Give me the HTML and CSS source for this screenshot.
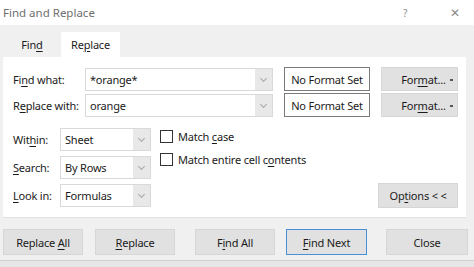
FILE: index.html
```html
<!DOCTYPE html>
<html lang="en">
  <head>
    <meta charset="UTF-8" />
    <title>Find and Replace</title>
    <link rel="stylesheet" href="styles.css">
  </head>
  <body>
    <div class="dialog">
      <header class="titlebar">
        <span class="title">Find and Replace</span>
        <span class="help">?</span>
        <span class="close-x">&#x2715;</span>
      </header>

      <nav class="tabs">
        <span class="tab"><span>Fin<u>d</u></span></span>
        <span class="tab active"><span>Re<u>p</u>lace</span></span>
      </nav>

      <section class="panel">
        <div class="top-grid">
          <label><span>Fi<u>n</u>d what:</span></label>
          <div class="combo wide"><span class="value">*orange*</span><span class="drop"></span></div>
          <div class="format-box">No Format Set</div>
          <button class="btn format-btn"><span>For<u>m</u>at...</span><span class="caret"></span></button>

          <label><span>R<u>e</u>place with:</span></label>
          <div class="combo wide"><span class="value">orange</span><span class="drop"></span></div>
          <div class="format-box">No Format Set</div>
          <button class="btn format-btn"><span>For<u>m</u>at...</span><span class="caret"></span></button>
        </div>

        <div class="lower">
          <div class="opt-grid">
            <label><span>Wit<u>h</u>in:</span></label>
            <div class="combo"><span class="value">Sheet</span><span class="drop"></span></div>
            <label><span><u>S</u>earch:</span></label>
            <div class="combo"><span class="value">By Rows</span><span class="drop"></span></div>
            <label><span><u>L</u>ook in:</span></label>
            <div class="combo"><span class="value">Formulas</span><span class="drop"></span></div>
          </div>

          <div class="checks">
            <div class="check"><span class="box"></span><span>Match <u>c</u>ase</span></div>
            <div class="check"><span class="box"></span><span>Match entire cell c<u>o</u>ntents</span></div>
          </div>

          <button class="btn options-btn">Op<u>t</u>ions &lt; &lt;</button>
        </div>
      </section>

      <footer class="actions">
        <button class="btn act replace-all">Replace <u>A</u>ll</button>
        <button class="btn act replace"><u>R</u>eplace</button>
        <button class="btn act find-all">F<u>i</u>nd All</button>
        <button class="btn act find-next"><u>F</u>ind Next</button>
        <button class="btn act close">Close</button>
      </footer>
      <div class="bottom-edge"></div>
    </div>
  </body>
</html>
```

FILE: styles.css
```css
* {
  margin: 0;
  padding: 0;
  box-sizing: border-box;
}

:root {
  --gray-bg: #f0f0f0;
  --btn-bg: #e1e1e1;
  --btn-border: #d6d6d6;
  --text: #1b1b1b;
  --blue: #4a90d9;
}

body {
  font-family: "Noto Sans", "Open Sans", sans-serif;
  font-size: 11px;
  letter-spacing: -0.2px;
  color: var(--text);
  background: var(--gray-bg);
}

u {
  text-decoration-thickness: 1px;
  text-underline-offset: 2px;
}

.dialog {
  width: 474px;
  height: 267px;
  overflow: hidden;
  background: var(--gray-bg);
}

/* title bar */
.titlebar {
  height: 25px;
  background: #fff;
  display: flex;
  align-items: center;
  padding-left: 3px;
  color: #6f6f6f;
  letter-spacing: 0;
}

.title {
  flex: 1;
  font-size: 11.5px;
}

.help {
  width: 47px;
  font-size: 10px;
  color: #8a8a8a;
}

.close-x {
  width: 24px;
  font-size: 12px;
  color: #8a8a8a;
}

/* tabs */
.tabs {
  height: 32px;
  display: flex;
  align-items: flex-end;
  padding-left: 3px;
}

.tab {
  height: 24px;
  width: 58px;
  display: flex;
  align-items: center;
  justify-content: center;
  padding-bottom: 1px;
}

.tab.active {
  background: #fff;
  width: 59px;
  height: 25px;
}

/* main panel */
.panel {
  background: #fff;
  margin: 0 8px 0 3px;
  height: 161px;
  padding: 10px 8px 0 10px;
  border-bottom: 1px solid #e2e2e2;
}

.top-grid {
  display: grid;
  grid-template-columns: 72px 188px 97px 88px;
  grid-auto-rows: 24px;
  row-gap: 2px;
  align-items: center;
}

.top-grid > * {
  height: 24px;
}

label {
  display: flex;
  align-items: center;
  white-space: nowrap;
}

.combo {
  display: flex;
  border: 1px solid #d9d9d9;
  height: 23px;
}

.combo .value {
  flex: 1;
  display: flex;
  align-items: center;
  padding-left: 4px;
}

.combo .drop {
  width: 17px;
  background: #e8e8e8;
  position: relative;
}

.combo .drop::after {
  content: "";
  position: absolute;
  left: 6px;
  top: 7px;
  width: 4px;
  height: 4px;
  border-right: 1px solid #a8a8a8;
  border-bottom: 1px solid #a8a8a8;
  transform: rotate(45deg);
}

.format-box {
  margin-left: 11px;
  border: 1px solid #7a7a7a;
  display: flex;
  align-items: center;
  justify-content: center;
}

.btn {
  font-family: inherit;
  font-size: 11px;
  letter-spacing: -0.2px;
  color: var(--text);
  background: var(--btn-bg);
  border: 1px solid var(--btn-border);
}

.format-btn {
  margin-left: 11px;
  display: flex;
  align-items: center;
  justify-content: center;
  padding-left: 8px;
  position: relative;
}

.format-btn .caret {
  position: absolute;
  right: 4px;
  top: 11px;
  width: 3px;
  height: 2px;
  background: #555;
}

/* lower options */
.lower {
  display: flex;
  margin-top: 11px;
}

.opt-grid {
  display: grid;
  grid-template-columns: 47px 91px;
  grid-auto-rows: 23px;
  row-gap: 5px;
}

.checks {
  margin-left: 9px;
  padding-top: 2px;
  display: flex;
  flex-direction: column;
  gap: 10px;
}

.check {
  display: flex;
  align-items: center;
  height: 13px;
  gap: 5px;
  white-space: nowrap;
}

.check .box {
  width: 13px;
  height: 13px;
  border: 1px solid #333;
  background: #fff;
}

.options-btn {
  margin-left: auto;
  align-self: flex-end;
  width: 80px;
  height: 25px;
  margin-bottom: -1px;
}

/* footer buttons */
.actions {
  display: flex;
  padding: 11px 0 0 3px;
  height: 42px;
}

.act {
  width: 80px;
  height: 26px;
}

.replace {
  margin-left: 12px;
}

.find-all {
  margin-left: 20px;
}

.find-next {
  margin-left: 11px;
  width: 81px;
  border-color: var(--blue);
}

.close {
  margin-left: 19px;
  width: 82px;
}

.bottom-edge {
  height: 8px;
  border-top: 1px solid #cfcfcf;
  background: #e6e6e6;
}
```
